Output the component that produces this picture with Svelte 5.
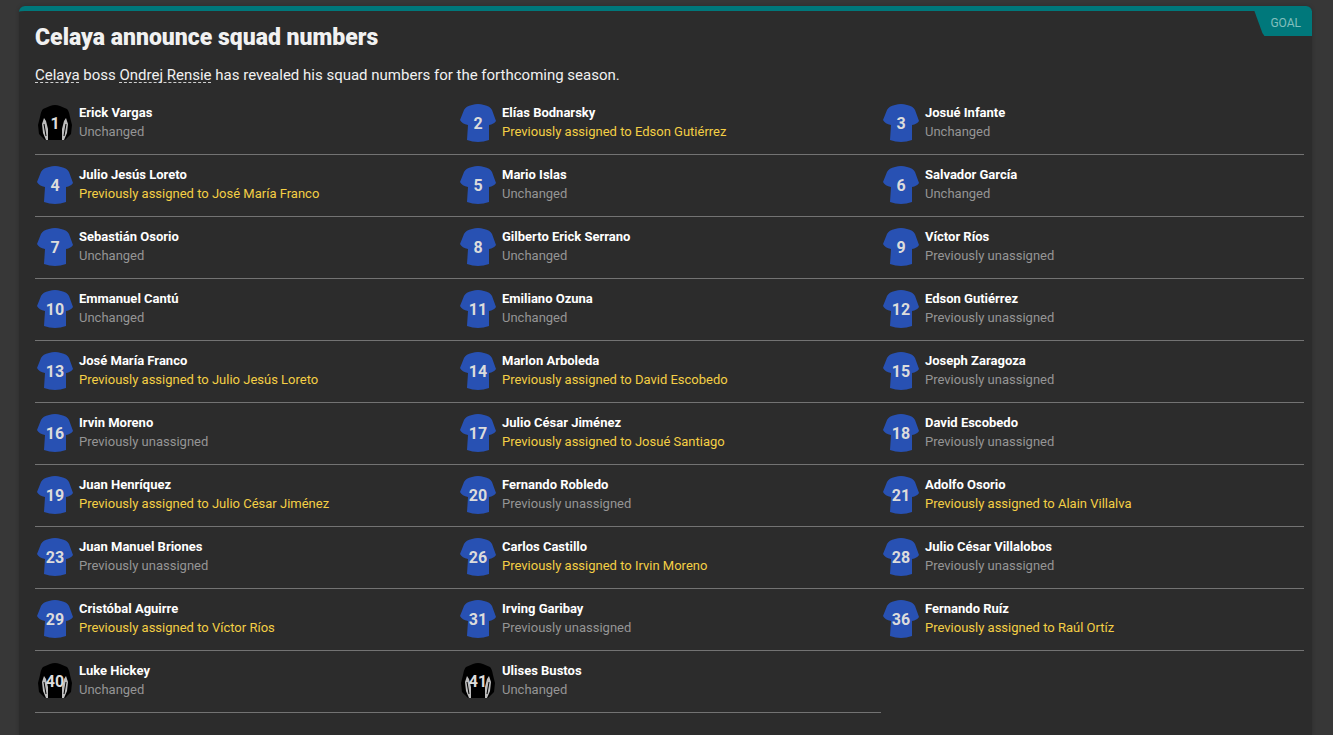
<script>
    // prev: name of the former holder, null when nobody had the number, undefined when unchanged
    const players = [
        {number: 1, name: "Erick Vargas", keeper: true},
        {number: 2, name: "Elías Bodnarsky", prev: "Edson Gutiérrez"},
        {number: 3, name: "Josué Infante"},
        {number: 4, name: "Julio Jesús Loreto", prev: "José María Franco"},
        {number: 5, name: "Mario Islas"},
        {number: 6, name: "Salvador García"},
        {number: 7, name: "Sebastián Osorio"},
        {number: 8, name: "Gilberto Erick Serrano"},
        {number: 9, name: "Víctor Ríos", prev: null},
        {number: 10, name: "Emmanuel Cantú"},
        {number: 11, name: "Emiliano Ozuna"},
        {number: 12, name: "Edson Gutiérrez", prev: null},
        {number: 13, name: "José María Franco", prev: "Julio Jesús Loreto"},
        {number: 14, name: "Marlon Arboleda", prev: "David Escobedo"},
        {number: 15, name: "Joseph Zaragoza", prev: null},
        {number: 16, name: "Irvin Moreno", prev: null},
        {number: 17, name: "Julio César Jiménez", prev: "Josué Santiago"},
        {number: 18, name: "David Escobedo", prev: null},
        {number: 19, name: "Juan Henríquez", prev: "Julio César Jiménez"},
        {number: 20, name: "Fernando Robledo", prev: null},
        {number: 21, name: "Adolfo Osorio", prev: "Alain Villalva"},
        {number: 23, name: "Juan Manuel Briones", prev: null},
        {number: 26, name: "Carlos Castillo", prev: "Irvin Moreno"},
        {number: 28, name: "Julio César Villalobos", prev: null},
        {number: 29, name: "Cristóbal Aguirre", prev: "Víctor Ríos"},
        {number: 31, name: "Irving Garibay", prev: null},
        {number: 36, name: "Fernando Ruíz", prev: "Raúl Ortíz"},
        {number: 40, name: "Luke Hickey", keeper: true},
        {number: 41, name: "Ulises Bustos", keeper: true},
    ];

    function status(player) {
        if (player.prev) return "Previously assigned to " + player.prev;
        return player.prev === null ? "Previously unassigned" : "Unchanged";
    }
</script>

<style>
    :global(body) {
        margin: 0;
        background: #373737;
    }

    .page {
        display: flex;
        box-sizing: border-box;
        min-height: 100vh;
        padding: 6px 21px 0 19px;
        font-family: Roboto, "Liberation Sans", sans-serif;
    }

    article {
        position: relative;
        flex: 1;
        padding: 17px 8px 20px 16px;
        border-top: 5px solid #00787b;
        border-radius: 6px 6px 0 0;
        background: #2c2c2c;
        box-shadow: 0 0 4px rgba(0, 0, 0, .2);
        color: #f1f1f1;
    }

    .tag {
        position: absolute;
        top: 0;
        right: 0;
        padding: 0 11px 0 16px;
        background: #00787b;
        clip-path: polygon(0 0, 100% 0, 100% 100%, 10px 100%, 8px 22px);
        color: #80bfbd;
        font-size: 12px;
        line-height: 25px;
    }

    h1 {
        margin: 0;
        font-size: 23px;
        font-weight: 900;
        line-height: 20px;
    }

    p {
        margin: 17px 0 7px;
        font-size: 15px;
        line-height: 21px;
    }

    a {
        color: inherit;
        text-decoration: underline dashed 1px #d0d0d0;
        text-decoration-skip-ink: none;
        text-underline-offset: 2px;
    }

    ul {
        display: grid;
        grid-template-columns: repeat(3, 1fr);
        margin: 0;
        padding: 0;
        list-style: none;
    }

    li {
        display: flex;
        gap: 4px;
        padding: 10px 0 11px;
        border-bottom: 1px solid #737373;
    }

    svg {
        width: 40px;
        height: 40px;
    }

    text {
        fill: #dcdcdc;
        font-size: 16px;
        font-weight: 700;
        text-anchor: middle;
    }

    .name, .status {
        font-size: 13px;
        line-height: 19px;
    }

    .name {
        color: #fff;
        font-weight: 700;
    }

    .status {
        color: #959595;
    }

    .changed {
        color: #f4cf45;
    }
</style>

<div class="page">
    <article>
        <span class="tag">GOAL</span>
        <h1>Celaya announce squad numbers</h1>
        <p>
            <a href="#celaya">Celaya</a> boss <a href="#manager">Ondrej Rensie</a> has revealed his squad numbers for the forthcoming season.
        </p>
        <ul>
            {#each players as player (player.number)}
                <li>
                    <svg viewBox="0 0 40 40" aria-hidden="true">
                        {#if player.keeper}
                            <path fill="#000" d="M15 3 Q20 1 25 3 L32 6 Q34 8 35 14 L37 22 L36 31 L33 34 L30 37 H10 L7 34 L4 31 L3 22 L5 14 Q6 8 8 6 Z"/>
                            <path fill="#bdbdbd" d="M9 15 L11 18 L13 26 V37 H11 L8 30 L7 21 Z M31 15 L29 18 L27 26 V37 H29 L32 30 L33 21 Z"/>
                            <path fill="none" stroke="#000" d="M9 21 L11 33 M31 21 L29 33"/>
                        {:else}
                            <path fill="#2851b3" d="M14 2 Q20 0 26 2 Q32 3 34 7 L38 18 Q36 21 31 22 L31 37 Q20 41 9 37 L10 22 Q4 21 2 17 L6 7 Q8 3 14 2 Z"/>
                        {/if}
                        <text x="20" y="26">{player.number}</text>
                    </svg>
                    <div>
                        <div class="name">{player.name}</div>
                        <div class="status" class:changed={player.prev}>{status(player)}</div>
                    </div>
                </li>
            {/each}
        </ul>
    </article>
</div>
